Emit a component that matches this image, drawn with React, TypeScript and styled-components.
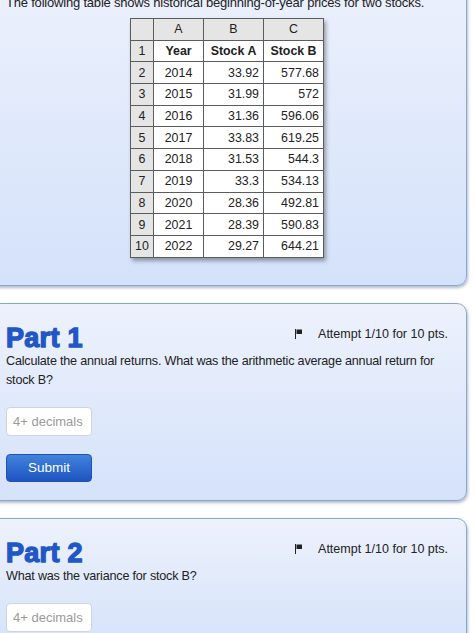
import React from 'react'
import styled, { createGlobalStyle } from 'styled-components'

const GlobalStyle = createGlobalStyle`
  html, body {
    margin: 0;
    padding: 0;
    background: #ffffff;
    overflow: hidden;
  }
  body {
    font-family: "Liberation Sans", Arial, sans-serif;
    color: #222;
  }
`

const rows: [number, string, string][] = [
  [2014, '33.92', '577.68'],
  [2015, '31.99', '572'],
  [2016, '31.36', '596.06'],
  [2017, '33.83', '619.25'],
  [2018, '31.53', '544.3'],
  [2019, '33.3', '534.13'],
  [2020, '28.36', '492.81'],
  [2021, '28.39', '590.83'],
  [2022, '29.27', '644.21'],
]

const Page = styled.div`
  width: 474px;
  height: 633px;
  overflow: hidden;
`

const Card = styled.section<{ $first?: boolean }>`
  margin: ${(p) => (p.$first ? '-37px' : '0')} 7px 17px -10px;
  padding: ${(p) => (p.$first ? '30px' : '21px')} 10px 18px 15px;
  border: 1px solid #86a7d6;
  border-radius: 10px;
  background: linear-gradient(180deg, #edf1fc 0%, #d4e2fa 100%);
  box-shadow: 1px 2px 3px rgba(40, 60, 100, 0.35);
`

const Intro = styled.p`
  margin: 0;
  font-size: 13px;
  letter-spacing: -0.2px;
  line-height: 18px;
  white-space: nowrap;
`

const TableWrap = styled.div`
  display: flex;
  justify-content: center;
  margin: 6px 0 9px;
  padding-right: 8px;
`

const Sheet = styled.table`
  border-collapse: collapse;
  background: #fff;
  border: 1px solid #5c5c5c;
  box-shadow: 2px 3px 4px rgba(0, 0, 0, 0.35);
  font-size: 12.4px;
  color: #222;
`

const Cell = styled.td<{ $head?: boolean; $align?: 'left' | 'center' | 'right'; $bold?: boolean; $w: number }>`
  width: ${(p) => p.$w}px;
  height: 21.7px;
  padding: 0 4px;
  box-sizing: border-box;
  border: 1px solid #5c5c5c;
  background: ${(p) => (p.$head ? '#e5e5e5' : '#ffffff')};
  text-align: ${(p) => p.$align ?? 'center'};
  font-weight: ${(p) => (p.$bold ? 700 : 400)};
  line-height: 20px;
`

const PartHeader = styled.div`
  display: flex;
  justify-content: space-between;
  align-items: flex-start;
  padding-right: 8px;
`

const PartTitle = styled.h2`
  margin: 0;
  font-size: 27px;
  line-height: 27px;
  font-weight: 700;
  color: #2156c6;
  -webkit-text-stroke: 1.3px #2156c6;
  letter-spacing: 0.3px;
`

const Attempt = styled.div`
  display: flex;
  align-items: center;
  gap: 16px;
  font-size: 12.5px;
  line-height: 18px;
  color: #222;
`

const Question = styled.p`
  margin: 0;
  font-size: 12.6px;
  letter-spacing: -0.2px;
  line-height: 19px;
  color: #222;
`

const Answer = styled.input`
  display: block;
  box-sizing: border-box;
  width: 86px;
  height: 29px;
  margin: 17px 0 0 0;
  padding: 0 6px;
  border: 1px solid #cfd3da;
  border-radius: 4px;
  background: #fff;
  font-family: "Liberation Sans", Arial, sans-serif;
  font-size: 13px;
  color: #333;
  &::placeholder {
    color: #9a9a9a;
  }
`

const SubmitButton = styled.button`
  display: block;
  box-sizing: border-box;
  width: 86px;
  height: 28px;
  margin-top: 18px;
  border: 1px solid #2050b0;
  border-radius: 4px;
  background: linear-gradient(180deg, #4183dd 0%, #1f54c0 100%);
  color: #fff;
  font-family: "Liberation Sans", Arial, sans-serif;
  font-size: 13.5px;
`

const Flag = () => (
  <svg width="7" height="10" viewBox="0 0 7 10">
    <rect x="0" y="0" width="1" height="10" fill="#222" />
    <rect x="1.5" y="0.5" width="5.5" height="4.5" fill="#222" />
  </svg>
)

function Part({ n, question, submit }: { n: number; question: string; submit?: boolean }) {
  return (
    <Card>
      <PartHeader>
        <PartTitle>Part {n}</PartTitle>
        <Attempt>
          <Flag />
          <span>Attempt 1/10 for 10 pts.</span>
        </Attempt>
      </PartHeader>
      <Question>{question}</Question>
      <Answer placeholder="4+ decimals" />
      {submit && <SubmitButton>Submit</SubmitButton>}
    </Card>
  )
}

export default function App() {
  return (
    <Page>
      <GlobalStyle />
      <Card $first>
        <Intro>The following table shows historical beginning-of-year prices for two stocks.</Intro>
        <TableWrap>
          <Sheet>
            <tbody>
              <tr>
                <Cell $head $w={23} />
                <Cell $head $w={50}>A</Cell>
                <Cell $head $w={60}>B</Cell>
                <Cell $head $w={60}>C</Cell>
              </tr>
              <tr>
                <Cell $head $w={23}>1</Cell>
                <Cell $bold $w={50}>Year</Cell>
                <Cell $bold $w={60}>Stock A</Cell>
                <Cell $bold $w={60}>Stock B</Cell>
              </tr>
              {rows.map(([year, a, b], i) => (
                <tr key={year}>
                  <Cell $head $w={23}>{i + 2}</Cell>
                  <Cell $w={50}>{year}</Cell>
                  <Cell $align="right" $w={60}>{a}</Cell>
                  <Cell $align="right" $w={60}>{b}</Cell>
                </tr>
              ))}
            </tbody>
          </Sheet>
        </TableWrap>
      </Card>
      <Part
        n={1}
        submit
        question="Calculate the annual returns. What was the arithmetic average annual return for stock B?"
      />
      <Part n={2} question="What was the variance for stock B?" />
    </Page>
  )
}
